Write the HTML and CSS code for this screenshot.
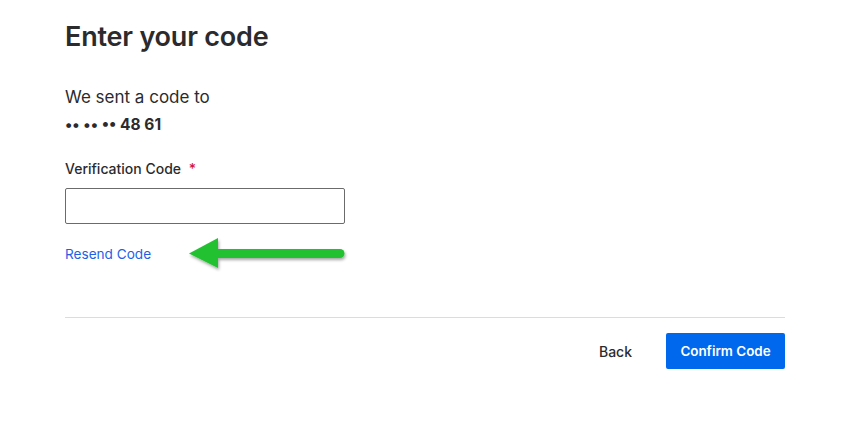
FILE: index.html
```html
<!DOCTYPE html>
<html lang="en">
<head>
  <meta charset="UTF-8">
  <meta name="viewport" content="width=device-width, initial-scale=1.0">
  <title>Enter your code</title>
  <link rel="stylesheet" href="styles.css">
</head>
<body>
  <div class="page">
    <h1>Enter your code</h1>

    <p class="sent">We sent a code to</p>
    <p class="phone">•• •• •• 48 61</p>

    <label class="field-label" for="code">Verification Code <span class="req">*</span></label>
    <input id="code" class="code-input" type="text">

    <div class="resend-row">
      <a href="#" class="resend">Resend Code</a>
      <svg class="arrow" width="170" height="40" viewBox="0 0 170 40">
        <defs>
          <filter id="shadow" x="-10%" y="-30%" width="120%" height="160%">
            <feDropShadow dx="1" dy="2" stdDeviation="1.5" flood-color="#000" flood-opacity="0.35"/>
          </filter>
        </defs>
        <g filter="url(#shadow)">
          <line x1="28" y1="18.5" x2="152" y2="18.5" stroke="#24c133" stroke-width="9" stroke-linecap="round"/>
          <polygon points="1,18.5 30,3 30,33" fill="#24c133"/>
        </g>
      </svg>
    </div>

    <hr class="divider">

    <div class="actions">
      <button class="btn-back">Back</button>
      <button class="btn-confirm">Confirm Code</button>
    </div>
  </div>
</body>
</html>
```

FILE: styles.css
```css
body {
  margin: 0;
  font-family: Inter, "Noto Sans", sans-serif;
  color: #2b2b2e;
  background: #fff;
}
.page {
  width: 720px;
  margin-left: 65px;
  padding-top: 18px;
}
h1 {
  margin: 0;
  font-size: 27px;
  font-weight: 600;
  line-height: 38px;
  letter-spacing: -0.2px;
}
.sent {
  margin: 29px 0 0;
  font-size: 17px;
  line-height: 24px;
}
.phone {
  margin: 5px 0 0;
  font-size: 15.5px;
  font-weight: 700;
  line-height: 22px;
}
.field-label {
  display: block;
  margin-top: 23px;
  font-size: 14px;
  font-weight: 500;
  line-height: 20px;
}
.req {
  color: #d4163c;
  margin-left: 4px;
}
.code-input {
  display: block;
  box-sizing: border-box;
  width: 280px;
  height: 36px;
  margin-top: 9px;
  border: 1px solid #6b6b6b;
  border-radius: 2px;
  font: inherit;
}
.resend-row {
  display: flex;
  align-items: center;
  margin-top: 13px;
  height: 34px;
}
.resend {
  color: #1e5fe6;
  text-decoration: none;
  font-size: 13.6px;
}
.arrow {
  margin-left: 37px;
  margin-top: 2px;
}
.divider {
  margin: 46px 0 0;
  border: 0;
  border-top: 1px solid #dcdcdc;
}
.actions {
  display: flex;
  justify-content: flex-end;
  align-items: center;
  margin-top: 15px;
}
.btn-back {
  background: none;
  border: 0;
  font: inherit;
  font-size: 14px;
  font-weight: 500;
  color: #2b2b2e;
  padding: 0;
  margin-right: 34px;
  cursor: pointer;
}
.btn-confirm {
  height: 36px;
  width: 119px;
  background: #0068ec;
  color: #fff;
  border: 0;
  border-radius: 2px;
  font: inherit;
  font-size: 13.4px;
  font-weight: 600;
  cursor: pointer;
}
```
